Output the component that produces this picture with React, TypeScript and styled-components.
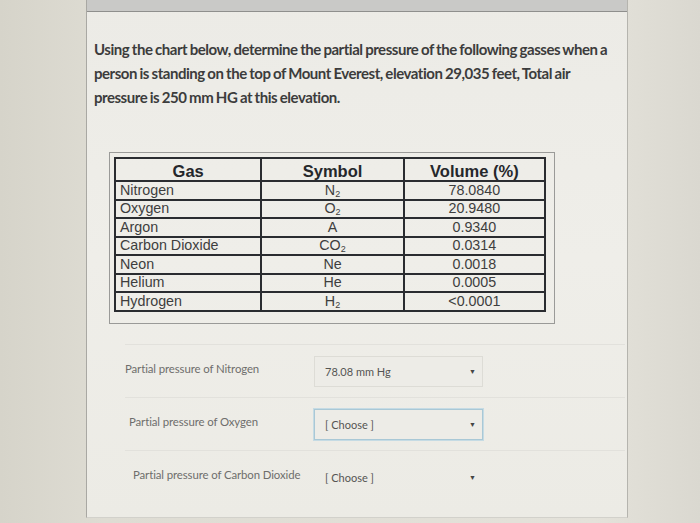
import React from "react";
import styled, { createGlobalStyle } from "styled-components";

const Global = createGlobalStyle`
  html, body { margin: 0; padding: 0; }
  body {
    width: 700px; height: 523px; overflow: hidden;
    background: linear-gradient(90deg, #d6d4ca 0%, #dedcd3 15%, #e4e2da 85%, #dad8d0 100%);
    font-family: Lato, "Open Sans", sans-serif;
  }
`;

const Page = styled.div`
  width: 700px;
  height: 523px;
  display: flex;
  flex-direction: column;
  align-items: stretch;
`;

const Card = styled.div`
  margin: 0 72px 0 86px;
  height: 517px;
  display: flex;
  flex-direction: column;
  background: linear-gradient(180deg, #ecebe6 0%, #efeee9 50%, #ecebe5 100%);
  border-left: 1px solid #a9a8a3;
  border-right: 1px solid #b5b4ae;
  border-bottom: 1px solid #d2d1cb;
`;

const TopStrip = styled.div`
  height: 11px;
  background: #c9c9c7;
  border-bottom: 1px solid #8f8f8d;
`;

const Question = styled.p`
  margin: 25px 0 0 7px;
  width: 540px;
  font-size: 15px;
  font-weight: 700;
  line-height: 24px;
  letter-spacing: -0.47px;
  word-spacing: -0.6px;
  color: #3c3c3c;
  white-space: nowrap;
`;

const Figure = styled.div`
  margin: 43px 0 0 22px;
  width: 446px;
  height: 172px;
  border: 1px solid #9a9a98;
  box-sizing: border-box;
  padding: 4px 0 0 4px;
`;

const Table = styled.table`
  border-collapse: collapse;
  width: 432px;
  font-family: "Liberation Sans", Arial, sans-serif;
  color: #3e3e3e;
  border: 2.5px solid #2a2c30;
`;

const Th = styled.th<{ $w: number }>`
  border: 2px solid #2a2c30;
  height: 21px;
  padding: 0;
  font-size: 16.5px;
  font-weight: 700;
  color: #25272b;
  line-height: 18px;
  vertical-align: bottom;
  width: ${(p) => p.$w}px;
`;

const Td = styled.td<{ $align?: string }>`
  border: 2px solid #2a2c30;
  height: 16.5px;
  padding: 0 4px;
  font-size: 14.3px;
  line-height: 15px;
  text-align: ${(p) => p.$align || "left"};
`;

const Rows = styled.div`
  margin: 20px 0 0 38px;
  width: 500px;
  display: flex;
  flex-direction: column;
`;

const Row = styled.div`
  height: 52px;
  display: flex;
  align-items: center;
  border-top: 1px solid #e2e1dc;
`;

const Label = styled.div<{ $indent: number }>`
  width: 189px;
  padding-left: ${(p) => p.$indent}px;
  padding-bottom: 5px;
  box-sizing: border-box;
  font-size: 11.4px;
  color: #6e6e6c;
  letter-spacing: -0.1px;
`;

const Select = styled.div<{ $variant: "plain" | "focus" | "none" }>`
  width: 169px;
  height: 31px;
  box-sizing: border-box;
  display: flex;
  align-items: center;
  justify-content: space-between;
  padding: 0 6px 0 10px;
  font-size: 11px;
  color: #555553;
  background: ${(p) => (p.$variant === "none" ? "transparent" : "#edece7")};
  border: 1px solid
    ${(p) =>
      p.$variant === "focus"
        ? "#a9c8d6"
        : p.$variant === "plain"
        ? "#dddcd6"
        : "transparent"};
  box-shadow: ${(p) =>
    p.$variant === "focus" ? "0 0 0 1px #c5dbe4" : "none"};
`;

const Caret = styled.span`
  font-size: 7px;
  color: #444;
`;

const Sub = styled.span`
  & sub { font-size: 9px; line-height: 0; vertical-align: -2px; }
`;

const gases: [string, React.ReactNode, string][] = [
  ["Nitrogen", <>N<sub>2</sub></>, "78.0840"],
  ["Oxygen", <>O<sub>2</sub></>, "20.9480"],
  ["Argon", "A", "0.9340"],
  ["Carbon Dioxide", <>CO<sub>2</sub></>, "0.0314"],
  ["Neon", "Ne", "0.0018"],
  ["Helium", "He", "0.0005"],
  ["Hydrogen", <>H<sub>2</sub></>, "<0.0001"],
];

export default function App() {
  return (
    <Page>
      <Global />
      <Card>
        <TopStrip />
        <Question>
          Using the chart below, determine the partial pressure of the following gasses when a
          <br />
          person is standing on the top of Mount Everest, elevation 29,035 feet, Total air
          <br />
          pressure is 250 mm HG at this elevation.
        </Question>
        <Figure>
          <Table>
            <thead>
              <tr>
                <Th $w={146}>Gas</Th>
                <Th $w={142}>Symbol</Th>
                <Th $w={141}>Volume (%)</Th>
              </tr>
            </thead>
            <tbody>
              {gases.map(([g, s, v]) => (
                <tr key={g}>
                  <Td>{g}</Td>
                  <Td $align="center">
                    <Sub>{s}</Sub>
                  </Td>
                  <Td $align="center">{v}</Td>
                </tr>
              ))}
            </tbody>
          </Table>
        </Figure>
        <Rows>
          <Row>
            <Label $indent={0}>Partial pressure of Nitrogen</Label>
            <Select $variant="plain">
              <span>78.08 mm Hg</span>
              <Caret>▼</Caret>
            </Select>
          </Row>
          <Row>
            <Label $indent={4}>Partial pressure of Oxygen</Label>
            <Select $variant="focus">
              <span>[ Choose ]</span>
              <Caret>▼</Caret>
            </Select>
          </Row>
          <Row>
            <Label $indent={8}>Partial pressure of Carbon Dioxide</Label>
            <Select $variant="none">
              <span>[ Choose ]</span>
              <Caret>▼</Caret>
            </Select>
          </Row>
        </Rows>
      </Card>
    </Page>
  );
}
